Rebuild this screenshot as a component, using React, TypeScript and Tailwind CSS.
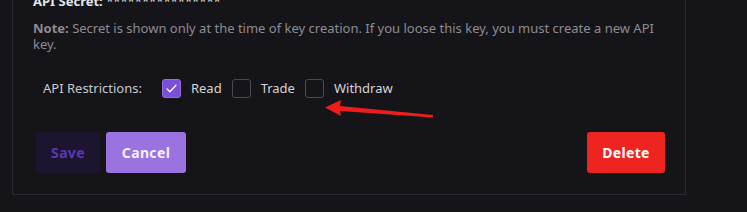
import React from "react"

function Checkbox({ checked, label }: { checked?: boolean; label: string }) {
    return (
        <label className="flex items-center gap-[10px]">
            <span
                className={
                    checked
                        ? "flex h-[19px] w-[19px] items-center justify-center rounded-[3px] border border-[#9170dc] bg-[#7a4fd8]"
                        : "h-[19px] w-[19px] rounded-[3px] border border-[#4a4950]"
                }
            >
                {checked && (
                    <svg viewBox="0 0 16 16" className="h-[13px] w-[13px]" fill="none" stroke="#ffffff" strokeWidth="1.6" strokeLinecap="round" strokeLinejoin="round">
                        <path d="M2.5 8.5l3.5 3.5 7.5-8" />
                    </svg>
                )}
            </span>
            <span className="text-[13px] text-[#d4d4d8]">{label}</span>
        </label>
    )
}

export default function App() {
    return (
        <div className="relative h-[212px] w-[747px] overflow-hidden bg-[#151419] font-['Noto_Sans',sans-serif]">
            <div className="-mt-[9px] ml-3 w-[674px] border-x border-b border-[#2b2a31] px-5 pb-[21px]">
                <p className="text-[13px] leading-5 text-[#e4e4e7]">
                    <span className="font-bold">API Secret:</span> ****************
                </p>
                <p className="mt-[9px] text-[13px] leading-4 text-[#8d8c93]">
                    <span className="font-bold">Note:</span> Secret is shown only at the time of key creation. If you loose this key, you must create a new API key.
                </p>

                {/* Restrictions */}
                <div className="mt-[27px] flex items-center pl-[10px]">
                    <span className="mr-5 text-[13px] text-[#c9c9ce]">API Restrictions:</span>
                    <div className="flex items-center gap-[10px]">
                        <Checkbox checked label="Read" />
                        <Checkbox label="Trade" />
                        <Checkbox label="Withdraw" />
                    </div>
                </div>

                {/* Action buttons */}
                <div className="mt-[33px] flex items-center justify-between">
                    <div className="flex gap-[6px] pl-[3px]">
                        <button className="h-[41px] w-[64px] rounded-[3px] bg-[#1d1530] text-[14px] font-bold tracking-wide text-[#5b36b8]">
                            Save
                        </button>
                        <button className="h-[41px] w-[80px] rounded-[3px] bg-[#9a73e0] text-[14px] font-bold tracking-wide text-[#f5f0ff]">
                            Cancel
                        </button>
                    </div>
                    <button className="h-[41px] w-[78px] rounded-[3px] bg-[#ee2421] text-[14px] font-bold tracking-wide text-white">
                        Delete
                    </button>
                </div>
            </div>

            {/* annotation arrow */}
            <svg className="absolute left-0 top-0" width="747" height="212" viewBox="0 0 747 212">
                <polygon points="325,107.5 341,100 340,106 433,115 433,117.5 340,111 341,116" fill="#ee1c1c" />
            </svg>
        </div>
    )
}
